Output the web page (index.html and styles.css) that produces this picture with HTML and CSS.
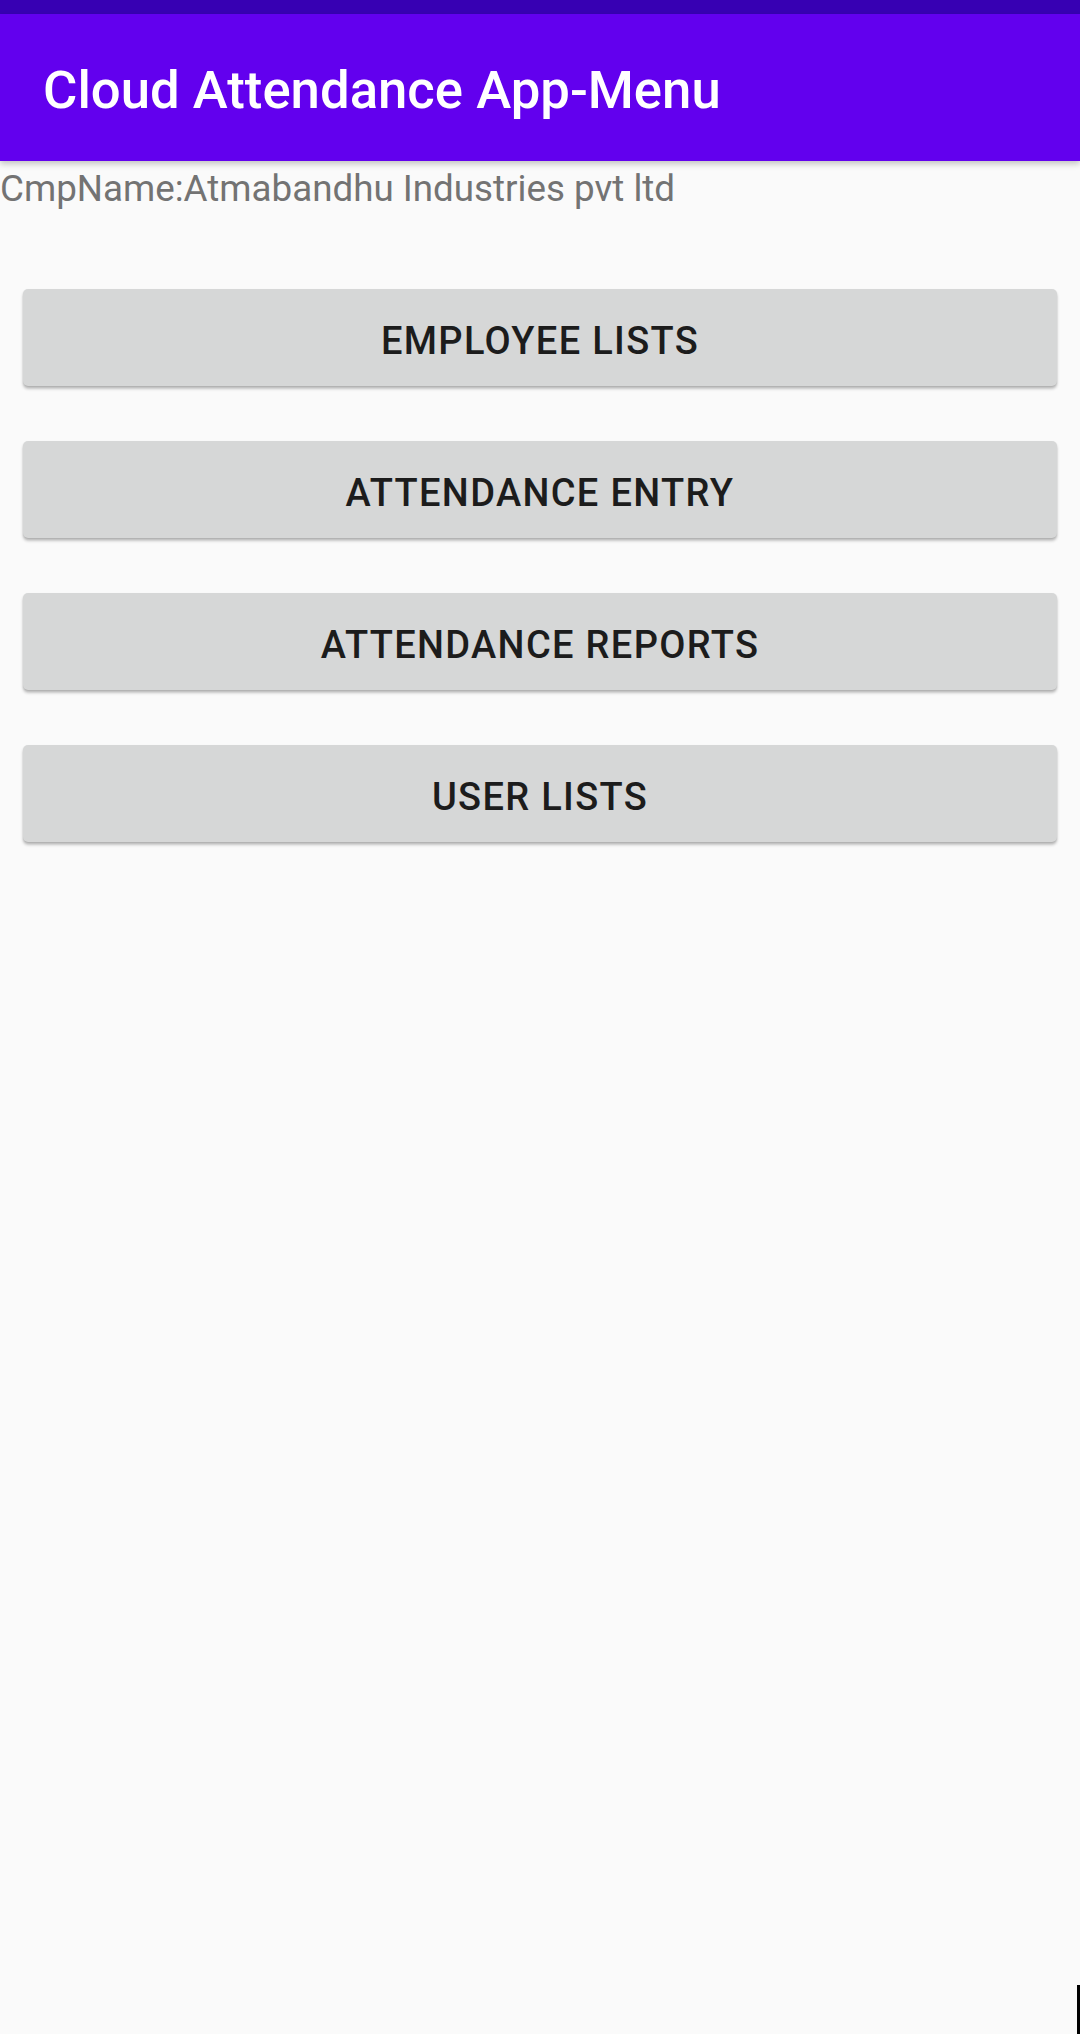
FILE: index.html
```html
<!DOCTYPE html>
<html>
<head>
<meta charset="utf-8">
<link rel="stylesheet" href="styles.css">
</head>
<body>
<div class="status-bar"></div>
<header class="toolbar">
  <h1 class="title">Cloud Attendance App-Menu</h1>
</header>
<main class="content">
  <p class="company">CmpName:Atmabandhu Industries pvt ltd</p>
  <div class="menu">
    <button class="btn">EMPLOYEE LISTS</button>
    <button class="btn">ATTENDANCE ENTRY</button>
    <button class="btn">ATTENDANCE REPORTS</button>
    <button class="btn">USER LISTS</button>
  </div>
</main>
<div class="corner-mark"></div>
</body>
</html>
```
FILE: styles.css
```css
html, body {
  margin: 0;
  padding: 0;
}
body {
  width: 1080px;
  height: 2034px;
  background: #fafafa;
  font-family: Roboto, "Noto Sans", sans-serif;
  overflow: hidden;
  position: relative;
}
.status-bar {
  height: 14px;
  background: #3700b3;
}
.toolbar {
  height: 147px;
  background: #6200ee;
  display: flex;
  align-items: center;
  padding-left: 43px;
  box-shadow: 0 3px 6px rgba(0,0,0,0.22);
  position: relative;
  z-index: 1;
}
.title {
  margin: 0;
  color: #ffffff;
  font-size: 52.7px;
  font-weight: 500;
  line-height: 1;
  padding-top: 6px;
}
.content {
  display: flex;
  flex-direction: column;
}
.company {
  margin: 0;
  font-size: 36.75px;
  color: #737373;
  line-height: 49px;
  height: 49px;
  padding-top: 3px;
}
.menu {
  display: flex;
  flex-direction: column;
  gap: 55px;
  padding: 76px 23px 0 23px;
}
.btn {
  height: 97px;
  border: none;
  border-radius: 5px;
  background: #d6d7d7;
  color: #1c1c1c;
  font-family: Roboto, "Noto Sans", sans-serif;
  font-size: 38px;
  font-weight: 500;
  letter-spacing: 0.035em;
  box-shadow: 0 3px 3px rgba(0,0,0,0.22), 0 1px 2px rgba(0,0,0,0.12);
  padding: 6px 0 0 0;
}
.corner-mark {
  position: absolute;
  right: 0;
  bottom: 0;
  width: 3px;
  height: 49px;
  background: #000;
}
```
